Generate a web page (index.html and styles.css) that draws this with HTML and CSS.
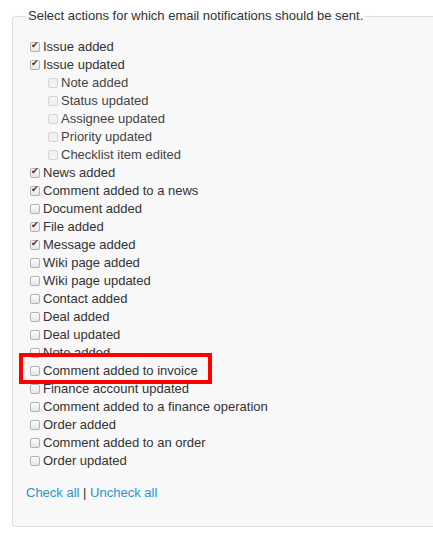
FILE: index.html
```html
<html>
<head>
  <meta name="viewport" content="width=device-width, initial-scale=1.0">
  <link rel="stylesheet" href="styles.css">
</head>
<body>
  <fieldset class="box">
    <legend>Select actions for which email notifications should be sent.</legend>
    <div class="actions">
      <label class="row"><input type="checkbox" checked> Issue added</label>
      <label class="row"><input type="checkbox" checked> Issue updated</label>
      <div class="sub">
        <label class="row"><input type="checkbox" disabled> Note added</label>
        <label class="row"><input type="checkbox" disabled> Status updated</label>
        <label class="row"><input type="checkbox" disabled> Assignee updated</label>
        <label class="row"><input type="checkbox" disabled> Priority updated</label>
        <label class="row"><input type="checkbox" disabled> Checklist item edited</label>
      </div>
      <label class="row"><input type="checkbox" checked> News added</label>
      <label class="row"><input type="checkbox" checked> Comment added to a news</label>
      <label class="row"><input type="checkbox"> Document added</label>
      <label class="row"><input type="checkbox" checked> File added</label>
      <label class="row"><input type="checkbox" checked> Message added</label>
      <label class="row"><input type="checkbox"> Wiki page added</label>
      <label class="row"><input type="checkbox"> Wiki page updated</label>
      <label class="row"><input type="checkbox"> Contact added</label>
      <label class="row"><input type="checkbox"> Deal added</label>
      <label class="row"><input type="checkbox"> Deal updated</label>
      <label class="row"><input type="checkbox"> Note added</label>
      <label class="row marked"><input type="checkbox"> Comment added to invoice<span class="highlight"></span></label>
      <label class="row"><input type="checkbox"> Finance account updated</label>
      <label class="row"><input type="checkbox"> Comment added to a finance operation</label>
      <label class="row"><input type="checkbox"> Order added</label>
      <label class="row"><input type="checkbox"> Comment added to an order</label>
      <label class="row"><input type="checkbox"> Order updated</label>
    </div>
    <p class="links"><a href="#">Check all</a> | <a href="#">Uncheck all</a></p>
  </fieldset>
</body>
</html>
```

FILE: styles.css
```css
html, body { margin: 0; padding: 0; background: #fff; }
body {
  font-family: "Liberation Sans", Arial, sans-serif;
  font-size: 13px;
  line-height: 18px;
  color: #333;
}

.box {
  margin: 7px 0 0 12px;
  padding: 0 0 25px 13px;
  width: 440px;
  height: 520px;
  box-sizing: border-box;
  border: 1px solid #dedede;
  border-radius: 3px;
  background: #f8f8f8;
}
.box legend {
  padding: 0 2px;
  color: #333;
  line-height: 18px;
}

.actions { margin-top: 13px; }
.row {
  display: flex;
  align-items: center;
  height: 18px;
}
.sub { padding-left: 18px; }

.row input {
  -webkit-appearance: none;
  appearance: none;
  position: relative;
  width: 10px;
  height: 10px;
  margin: 0 3px 0 4px;
  border: 1px solid #b3b3b3;
  border-radius: 2px;
  background: linear-gradient(#fdfdfd, #e6e6e6);
  box-sizing: border-box;
}
.row input:checked::after {
  content: "\2714";
  position: absolute;
  left: 0;
  top: -3px;
  font-size: 9px;
  color: #333;
}
.row input:disabled {
  border-color: #d6d6d6;
  background: #f1f1f1;
}
.sub .row { color: #444; }

.marked { position: relative; }
.highlight {
  position: absolute;
  left: -7px;
  top: -9px;
  width: 193px;
  height: 31px;
  border: 4px solid #f00;
  box-sizing: border-box;
}

.links {
  margin: 14px 0 0 0;
  color: #333;
}
.links a {
  color: #2a96cc;
  text-decoration: none;
}
```
